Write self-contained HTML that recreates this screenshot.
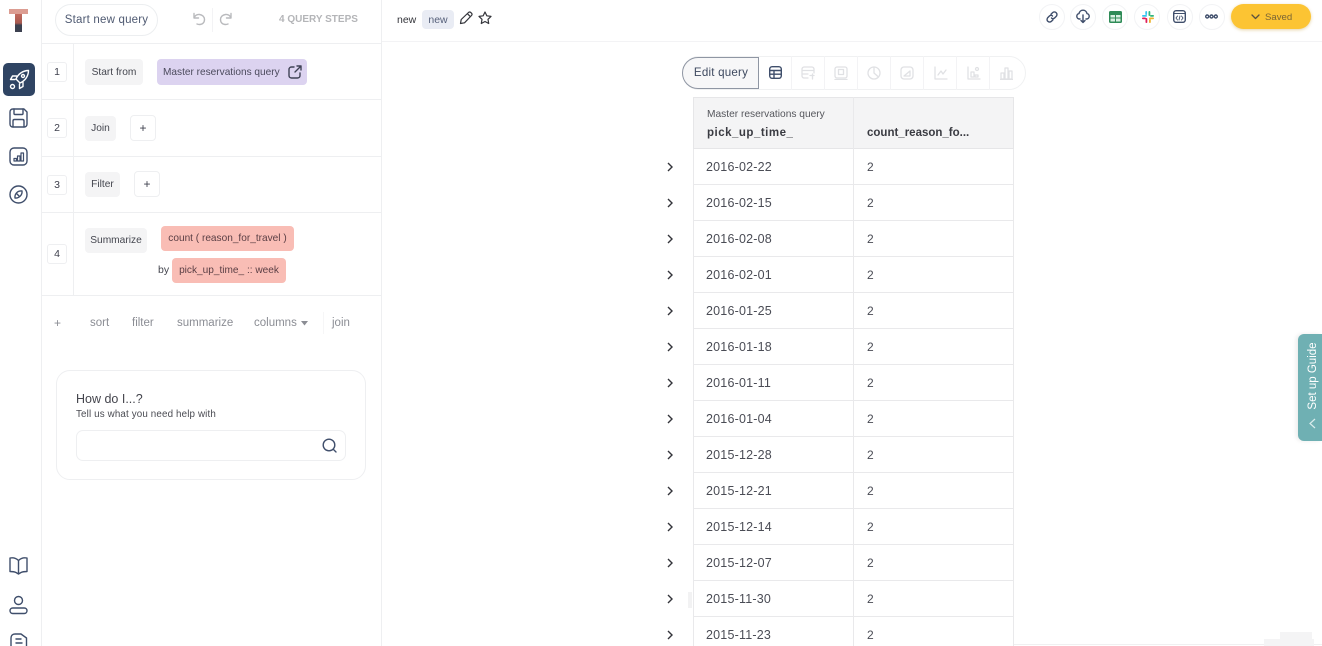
<!DOCTYPE html>
<html><head><meta charset="utf-8"><style>
html,body{margin:0;padding:0;background:#fff}
#p{position:relative;width:1322px;height:646px;overflow:hidden;background:#fff;font-family:"Liberation Sans",sans-serif;color:#3d3f4c;filter:blur(.3px)}
#p div,#p svg{position:absolute;box-sizing:border-box}
.t{white-space:nowrap;line-height:16px}
.ln{background:#eeeff1}
.chip{border-radius:4px;background:#f4f4f5;font-size:10.2px;text-align:center;color:#44464f}
.num{width:20px;height:20px;border:1px solid #eeeff1;border-radius:3px;font-size:10.5px;text-align:center;line-height:18px;left:47px}
.plus{border:1px solid #eeeff1;border-radius:4px;width:26px;height:26px;text-align:center;line-height:25px;font-size:12px}
.ic{fill:none;stroke:#3f4e6b;stroke-width:1.4;stroke-linecap:round;stroke-linejoin:round}
.rb{width:26px;height:26px;border:1px solid #f2f3f5;border-radius:50%;background:#fff;top:4px}
.seg{top:56px;width:1px;height:34px;background:#f3f3f5}
.lt{fill:none;stroke:#e0e1e4;stroke-width:1.3;stroke-linejoin:round;stroke-linecap:round}
.r{left:693px;width:321px;height:36px;border:1px solid #e9e9eb;border-top:0;font-size:12.5px;line-height:37px;color:#4a4c55}
.r i{position:absolute;left:12px;font-style:normal;letter-spacing:.2px}
.r b{position:absolute;left:173px;font-weight:400;font-size:12px}
.c{left:666px;width:8px;height:12px}
.a{color:#8b8d94;font-size:11.5px;top:315px}
</style></head><body><div id="p">

<!-- sidebars lines -->
<div class="ln" style="left:41px;top:0;width:1px;height:646px"></div>
<div class="ln" style="left:381px;top:0;width:1px;height:646px"></div>
<div class="ln" style="left:42px;top:43px;width:339px;height:1px"></div>
<div class="ln" style="left:42px;top:99px;width:339px;height:1px"></div>
<div class="ln" style="left:42px;top:156px;width:339px;height:1px"></div>
<div class="ln" style="left:42px;top:212px;width:339px;height:1px"></div>
<div class="ln" style="left:42px;top:295px;width:339px;height:1px"></div>
<div class="ln" style="left:73px;top:44px;width:1px;height:251px"></div>
<div class="ln" style="left:382px;top:41px;width:940px;height:1px;background:#f3f3f5"></div>

<!-- logo -->
<div style="left:9px;top:9px;width:19px;height:5px;background:#dc9d92"></div>
<div style="left:15px;top:14px;width:7px;height:18px;background:linear-gradient(#c26a5e 0,#a85a50 50%,#3c4150 62%,#3c4150 100%)"></div>

<!-- nav icons -->
<div style="left:3px;top:63px;width:32px;height:33px;border-radius:5px;background:#2f4463"></div>
<svg style="left:8px;top:68px" width="23" height="23" viewBox="0 0 23 23" class="ic"><path d="M8 11C10 6 15 2.500 20.500 2.500C20.500 8 17 13 12 15L8 11Z" stroke="#fff"/><path d="M8.500 8H4.500L2.500 11.500H7M15 14.500V18.500L11.500 20.500V16" stroke="#fff"/><circle cx="15" cy="8" r="1.500" stroke="#fff"/><circle cx="4.500" cy="18.500" r="2" stroke="#fff"/></svg>
<svg style="left:9px;top:108px" width="19" height="20" viewBox="0 0 19 20" class="ic"><path d="M4 1H15L18 4V16C18 17.700 17 19 15 19H4C2 19 1 17.700 1 16V4C1 2.300 2 1 4 1Z"/><path d="M5 1V5.500C5 6.200 5.500 6.500 6 6.500H13C13.500 6.500 14 6.200 14 5.500V1M4 19V13C4 12 4.500 11.500 5.500 11.500H13.500C14.500 11.500 15 12 15 13V19"/></svg>
<svg style="left:9px;top:147px" width="19" height="19" viewBox="0 0 19 19" class="ic"><rect x="1" y="1" width="17" height="17" rx="4"/><path d="M5 14V11.500H7.500V14H5ZM8.500 14V9H11V14H8.500ZM12 14V6H14.500V14H12Z" stroke-width="1.200"/></svg>
<svg style="left:9px;top:185px" width="19" height="19" viewBox="0 0 19 19" class="ic"><circle cx="9.500" cy="9.500" r="8.500"/><path d="M6 13C5.500 9 8.500 5.500 13 6C13.500 10 10 13.500 6 13ZM7.500 8.500L10.500 11.500"/></svg>
<svg style="left:9px;top:556px" width="19" height="19" viewBox="0 0 19 19" class="ic"><path d="M9.500 18L7 16.500C5 15.500 3 15.500 1 15.500V2C3.500 1.500 7 2 9.500 4.500C12 2 15.500 1.500 18 2V15.500C16 15.500 14 15.500 12 16.500L9.500 18ZM9.500 4.500V18"/></svg>
<svg style="left:9px;top:595px" width="19" height="20" viewBox="0 0 19 20" class="ic"><circle cx="9.500" cy="5.500" r="4"/><rect x="1" y="13" width="17" height="5.500" rx="2.750"/></svg>
<svg style="left:10px;top:633px" width="18" height="13" viewBox="0 0 18 13" class="ic"><path d="M1 14V5C1 2.500 2.500 1 5 1H11L16.500 5V14M6 6H11M6 10H12"/></svg>

<!-- top of panel -->
<div class="t" style="left:55px;top:4px;width:103px;height:32px;border:1px solid #eceef0;border-radius:16px;font-size:11.5px;line-height:30px;text-align:center;color:#4f5a72;letter-spacing:.2px">Start new query</div>
<svg style="left:192px;top:12px" width="14" height="14" viewBox="0 0 14 14" fill="none" stroke="#b9babd" stroke-width="1.400" stroke-linecap="round" stroke-linejoin="round"><path d="M2 1.500V6H6.500M2 6C3 3.500 5 2.300 7.500 2.500C10.500 2.800 12.500 5 12.500 7.500C12.500 10.500 10.500 12.500 7.500 12.500C6.500 12.500 5.500 12.200 5 12"/></svg>
<div class="ln" style="left:212px;top:8px;width:1px;height:24px;background:#f3f3f5"></div>
<svg style="left:219px;top:12px" width="14" height="14" viewBox="0 0 14 14" fill="none" stroke="#b9babd" stroke-width="1.400" stroke-linecap="round" stroke-linejoin="round"><path d="M12 1.500V6H7.500M12 6C11 3.500 9 2.300 6.500 2.500C3.500 2.800 1.500 5 1.500 7.500C1.500 10.500 3.500 12.500 6.500 12.500C7.500 12.500 8.500 12.200 9 12"/></svg>
<div class="t" style="left:279px;top:12px;font-size:10px;font-weight:700;color:#b4b5b8">4 QUERY STEPS</div>

<!-- step 1 -->
<div class="num" style="top:62px">1</div>
<div class="chip t" style="left:85px;top:59px;width:58px;height:26px;line-height:28px">Start from</div>
<div class="t" style="left:157px;top:59px;width:150px;height:26px;background:#dcd3f0;border-radius:4px"></div>
<div class="t" style="left:163px;top:65px;font-size:10.1px;color:#4b4a5c">Master reservations query</div>
<svg style="left:288px;top:65px" width="14" height="14" viewBox="0 0 14 14" fill="none" stroke="#3f4255" stroke-width="1.400" stroke-linecap="round" stroke-linejoin="round"><path d="M6 2H3.500C2 2 1 3 1 4.500V10.500C1 12 2 13 3.500 13H9.500C11 13 12 12 12 10.500V8M7 7L13 1M9 1H13V5"/></svg>

<!-- step 2 -->
<div class="num" style="top:118px">2</div>
<div class="chip t" style="left:85px;top:116px;width:31px;height:25px;line-height:26px">Join</div>
<div class="plus" style="left:130px;top:115px">+</div>

<!-- step 3 -->
<div class="num" style="top:175px">3</div>
<div class="chip t" style="left:85px;top:172px;width:35px;height:25px;line-height:26px">Filter</div>
<div class="plus" style="left:134px;top:171px">+</div>

<!-- step 4 -->
<div class="num" style="top:244px">4</div>
<div class="chip t" style="left:85px;top:228px;width:62px;height:25px;line-height:26px">Summarize</div>
<div class="t" style="left:161px;top:226px;width:133px;height:25px;background:#f9bdb5;border-radius:4px;font-size:10.1px;line-height:26px;text-align:center;color:#5a3e44">count ( reason_for_travel )</div>
<div class="t" style="left:158px;top:262px;font-size:10.5px;color:#44464f">by</div>
<div class="t" style="left:172px;top:258px;width:114px;height:25px;background:#f9bdb5;border-radius:4px;font-size:10.1px;line-height:26px;text-align:center;color:#5a3e44">pick_up_time_ :: week</div>

<!-- actions -->
<div class="t a" style="left:54px;font-size:12px">+</div>
<div class="t a" style="left:90px">sort</div>
<div class="t a" style="left:132px">filter</div>
<div class="t a" style="left:177px">summarize</div>
<div class="t a" style="left:254px">columns</div>
<svg style="left:301px;top:321px" width="7" height="5" viewBox="0 0 7 5"><path d="M0 0H7L3.500 4.500Z" fill="#8b8d94"/></svg>
<div class="ln" style="left:323px;top:312px;width:1px;height:22px;background:#f6f6f7"></div>
<div class="t a" style="left:332px">join</div>

<!-- help -->
<div style="left:56px;top:370px;width:310px;height:110px;border:1px solid #eeeff1;border-radius:14px"></div>
<div class="t" style="left:76px;top:391px;font-size:12.5px;color:#44454d">How do I...?</div>
<div class="t" style="left:76px;top:407px;font-size:9.8px;color:#4a4b52;letter-spacing:.14px">Tell us what you need help with</div>
<div style="left:76px;top:430px;width:270px;height:31px;border:1px solid #eeeff1;border-radius:7px"></div>
<svg style="left:322px;top:438px" width="15" height="15" viewBox="0 0 15 15" class="ic"><circle cx="7" cy="7" r="5.800"/><path d="M11.500 11.500L14 14"/></svg>

<!-- title -->
<div class="t" style="left:397px;top:12px;font-size:10.5px;color:#33343a">new</div>
<div class="t" style="left:422px;top:10px;width:32px;height:19px;background:#e9ecf4;border-radius:4px;font-size:10.5px;line-height:20px;text-align:center;color:#56607a">new</div>
<svg style="left:459px;top:11px" width="14" height="14" viewBox="0 0 14 14" fill="none" stroke="#33343a" stroke-width="1.200" stroke-linejoin="round" stroke-linecap="round"><path d="M1.500 12.500L2.200 8.500L9.500 1.500C10.200 .8 11 .8 11.800 1.500L12.500 2.200C13.200 3 13.200 3.800 12.500 4.500L5.500 11.800L1.500 12.500ZM8.500 2.800L11.300 5.600"/></svg>
<svg style="left:478px;top:11px" width="14" height="14" viewBox="0 0 14 14" fill="none" stroke="#33343a" stroke-width="1.200" stroke-linejoin="round"><path d="M7 1L8.800 4.800L13 5.400L10 8.300L10.700 12.500L7 10.500L3.300 12.500L4 8.300L1 5.400L5.200 4.800Z"/></svg>

<!-- right buttons -->
<div class="rb" style="left:1039px"></div>
<svg style="left:1046px;top:11px" width="12" height="12" viewBox="0 0 12 12" class="ic" stroke-width="1.100"><path d="M5 3.200L6.500 1.700C7.500 .7 9.200 .7 10.200 1.700C11.200 2.700 11.200 4.400 10.200 5.400L8.700 6.900C7.700 7.900 6 7.900 5.500 7M7 8.800L5.500 10.300C4.500 11.300 2.800 11.300 1.800 10.300C.8 9.300 .8 7.600 1.800 6.600L3.300 5.100C4.300 4.100 6 4.100 6.500 5"/></svg>
<div class="rb" style="left:1070px"></div>
<svg style="left:1076px;top:9px" width="14" height="15" viewBox="0 0 14 15" class="ic" stroke-width="1"><path d="M4 10H3.500C2 10 .8 8.800 .8 7.300C.8 5.900 1.800 4.800 3 4.600C3.400 2.600 5 1.200 7 1.200C9 1.200 10.600 2.600 11 4.600C12.200 4.800 13.200 5.900 13.200 7.300C13.200 8.800 12 10 10.500 10H10M7 6V13.500M5 11.500L7 13.500L9 11.500"/></svg>
<div class="rb" style="left:1102px"></div>
<svg style="left:1109px;top:11px" width="13" height="12" viewBox="0 0 13 12"><rect width="13" height="12" rx="1.500" fill="#2e8b57"/><path d="M1.500 4H6V6.500H1.500ZM7 4H11.500V6.500H7ZM1.500 7.500H6V10.500H1.500ZM7 7.500H11.500V10.500H7Z" fill="#d9efe2"/></svg>
<div class="rb" style="left:1134px"></div>
<svg style="left:1142px;top:11px" width="12" height="12" viewBox="0 0 12 12"><rect x="0" y="4" width="5" height="1.800" rx=".9" fill="#36c5f0"/><rect x="3.300" y="0" width="1.800" height="4" rx=".9" fill="#36c5f0"/><rect x="6.500" y="0" width="1.800" height="5" rx=".9" fill="#2eb67d"/><rect x="8" y="4" width="4" height="1.800" rx=".9" fill="#2eb67d"/><rect x="7" y="6.500" width="5" height="1.800" rx=".9" fill="#ecb22e"/><rect x="7" y="8" width="1.800" height="4" rx=".9" fill="#ecb22e"/><rect x="3.500" y="7" width="1.800" height="5" rx=".9" fill="#e01e5a"/><rect x="0" y="6.500" width="4" height="1.800" rx=".9" fill="#e01e5a"/></svg>
<div class="rb" style="left:1167px"></div>
<svg style="left:1173px;top:10px" width="13" height="13" viewBox="0 0 13 13" class="ic" stroke-width="1.100"><rect x=".7" y=".7" width="11.600" height="11.600" rx="2.500"/><path d="M.7 3.500H12.300M4.500 6L3 8L4.500 10M8.500 6L10 8L8.500 10M7 6L6 10" stroke-width=".9"/></svg>
<div class="rb" style="left:1199px"></div>
<svg style="left:1205px;top:14px" width="13" height="5" viewBox="0 0 13 5" class="ic" stroke-width="1"><circle cx="2.200" cy="2.500" r="1.500"/><circle cx="6.500" cy="2.500" r="1.500"/><circle cx="10.800" cy="2.500" r="1.500"/></svg>
<div style="left:1231px;top:4px;width:80px;height:25px;border-radius:13px;background:#fcc433;box-shadow:0 1px 3px rgba(200,160,60,.45)"></div>
<svg style="left:1251px;top:14px" width="9" height="6" viewBox="0 0 9 6" fill="none" stroke="#5a5040" stroke-width="1.300" stroke-linecap="round" stroke-linejoin="round"><path d="M1 1L4.500 4.500L8 1"/></svg>
<div class="t" style="left:1265px;top:10px;font-size:9.6px;color:#7a6535">Saved</div>

<!-- viz toolbar -->
<div style="left:682px;top:56px;width:344px;height:34px;border:1px solid #f0f1f2;border-radius:17px"></div>
<div class="t" style="left:682px;top:57px;width:77px;height:32px;border:1px solid #8f96a3;border-radius:16px 0 0 16px;background:#f7f7f8;font-size:11.6px;line-height:30px;text-align:center;padding-left:1px;color:#3f4a60;letter-spacing:.2px">Edit query</div>
<svg style="left:769px;top:66px" width="13" height="13" viewBox="0 0 13 13" class="ic" stroke-width="1.300"><rect x=".7" y=".7" width="11.600" height="11.600" rx="2.500"/><path d="M.7 4.500H12.300M.7 8.200H12.300M5 4.500V12.300"/></svg>
<div class="seg" style="left:791px"></div><div class="seg" style="left:824px"></div><div class="seg" style="left:857px"></div><div class="seg" style="left:890px"></div><div class="seg" style="left:923px"></div><div class="seg" style="left:956px"></div><div class="seg" style="left:989px"></div>
<svg style="left:801px;top:66px" width="14" height="14" viewBox="0 0 14 14" class="lt"><path d="M7 12H3C2 12 1 11 1 10V3C1 2 2 1 3 1H11C12 1 13 2 13 3V7M1 4.500H13M1 8H7M9 9.500H13M11.500 8V13"/></svg>
<svg style="left:834px;top:66px" width="14" height="14" viewBox="0 0 14 14" class="lt"><rect x="1" y="1" width="12" height="11" rx="2"/><rect x="4.500" y="3.500" width="5" height="5"/><path d="M1 13.500H13"/></svg>
<svg style="left:867px;top:66px" width="14" height="14" viewBox="0 0 14 14" class="lt"><circle cx="7" cy="7" r="6"/><path d="M7 1V7L11.500 11"/></svg>
<svg style="left:900px;top:66px" width="14" height="14" viewBox="0 0 14 14" class="lt"><rect x="1" y="1" width="12" height="12" rx="3"/><path d="M4 10L10 5V10Z"/></svg>
<svg style="left:934px;top:66px" width="14" height="14" viewBox="0 0 14 14" class="lt"><path d="M1 1V13H13M4 9L7 5L9 8L12 4"/></svg>
<svg style="left:967px;top:66px" width="14" height="14" viewBox="0 0 14 14" class="lt"><path d="M1 1V13H13M4 8V11H7V6H4ZM8 9H11V11H8Z"/><circle cx="10" cy="3" r="1.500"/></svg>
<svg style="left:1000px;top:66px" width="13" height="14" viewBox="0 0 13 14" class="lt"><path d="M1 13V7H4V13ZM5 13V2H8V13ZM9 13V5H12V13ZM0 13.500H13"/></svg>

<!-- table header -->
<div style="left:693px;top:97px;width:321px;height:52px;background:#f4f4f5;border:1px solid #e6e6e8"></div>
<div style="left:853px;top:97px;width:1px;height:549px;background:#e9e9eb"></div>
<div class="t" style="left:707px;top:107px;font-size:10.2px;color:#55565c">Master reservations query</div>
<div class="t" style="left:707px;top:125px;font-size:11.5px;font-weight:700;color:#3a3b42;letter-spacing:.5px">pick_up_time_</div>
<div class="t" style="left:867px;top:125px;font-size:11.5px;font-weight:700;color:#3a3b42">count_reason_fo...</div>

<!-- rows -->
<div class="r" style="top:149px"><i>2016-02-22</i><b>2</b></div>
<div class="r" style="top:185px"><i>2016-02-15</i><b>2</b></div>
<div class="r" style="top:221px"><i>2016-02-08</i><b>2</b></div>
<div class="r" style="top:257px"><i>2016-02-01</i><b>2</b></div>
<div class="r" style="top:293px"><i>2016-01-25</i><b>2</b></div>
<div class="r" style="top:329px"><i>2016-01-18</i><b>2</b></div>
<div class="r" style="top:365px"><i>2016-01-11</i><b>2</b></div>
<div class="r" style="top:401px"><i>2016-01-04</i><b>2</b></div>
<div class="r" style="top:437px"><i>2015-12-28</i><b>2</b></div>
<div class="r" style="top:473px"><i>2015-12-21</i><b>2</b></div>
<div class="r" style="top:509px"><i>2015-12-14</i><b>2</b></div>
<div class="r" style="top:545px"><i>2015-12-07</i><b>2</b></div>
<div class="r" style="top:581px"><i>2015-11-30</i><b>2</b></div>
<div class="r" style="top:617px"><i>2015-11-23</i><b>2</b></div>
<div style="left:853px;top:149px;width:1px;height:497px;background:#e9e9eb"></div>

<!-- chevrons -->
<svg class="c" style="top:161px" viewBox="0 0 8 12"><path d="M2 2L6 6L2 10" fill="none" stroke="#33343a" stroke-width="1.400"/></svg>
<svg class="c" style="top:197px" viewBox="0 0 8 12"><path d="M2 2L6 6L2 10" fill="none" stroke="#33343a" stroke-width="1.400"/></svg>
<svg class="c" style="top:233px" viewBox="0 0 8 12"><path d="M2 2L6 6L2 10" fill="none" stroke="#33343a" stroke-width="1.400"/></svg>
<svg class="c" style="top:269px" viewBox="0 0 8 12"><path d="M2 2L6 6L2 10" fill="none" stroke="#33343a" stroke-width="1.400"/></svg>
<svg class="c" style="top:305px" viewBox="0 0 8 12"><path d="M2 2L6 6L2 10" fill="none" stroke="#33343a" stroke-width="1.400"/></svg>
<svg class="c" style="top:341px" viewBox="0 0 8 12"><path d="M2 2L6 6L2 10" fill="none" stroke="#33343a" stroke-width="1.400"/></svg>
<svg class="c" style="top:377px" viewBox="0 0 8 12"><path d="M2 2L6 6L2 10" fill="none" stroke="#33343a" stroke-width="1.400"/></svg>
<svg class="c" style="top:413px" viewBox="0 0 8 12"><path d="M2 2L6 6L2 10" fill="none" stroke="#33343a" stroke-width="1.400"/></svg>
<svg class="c" style="top:449px" viewBox="0 0 8 12"><path d="M2 2L6 6L2 10" fill="none" stroke="#33343a" stroke-width="1.400"/></svg>
<svg class="c" style="top:485px" viewBox="0 0 8 12"><path d="M2 2L6 6L2 10" fill="none" stroke="#33343a" stroke-width="1.400"/></svg>
<svg class="c" style="top:521px" viewBox="0 0 8 12"><path d="M2 2L6 6L2 10" fill="none" stroke="#33343a" stroke-width="1.400"/></svg>
<svg class="c" style="top:557px" viewBox="0 0 8 12"><path d="M2 2L6 6L2 10" fill="none" stroke="#33343a" stroke-width="1.400"/></svg>
<svg class="c" style="top:629px" viewBox="0 0 8 12"><path d="M2 2L6 6L2 10" fill="none" stroke="#33343a" stroke-width="1.400"/></svg>
<div style="left:688px;top:592px;width:4px;height:16px;background:#f2f2f3"></div>
<svg class="c" style="top:593px" viewBox="0 0 8 12"><path d="M2 2L6 6L2 10" fill="none" stroke="#33343a" stroke-width="1.400"/></svg>

<!-- bottom right bits -->
<div style="left:1014px;top:644px;width:308px;height:1px;background:#f0f0f1"></div>
<div style="left:1280px;top:632px;width:32px;height:14px;background:#f4f4f5"></div>
<div style="left:1264px;top:639px;width:50px;height:7px;background:#f4f4f5"></div>

<!-- guide tab -->
<div style="left:1298px;top:334px;width:24px;height:107px;background:#6fb0b3;border-radius:6px 0 0 6px;box-shadow:-2px 0 4px rgba(0,0,0,.08)"></div>
<div class="t" style="left:1271px;top:368px;width:80px;height:16px;transform:rotate(-90deg) translateY(2px);text-align:center;font-size:11.5px;color:#fff">Set up Guide</div>
<svg style="left:1309px;top:418px" width="7" height="11" viewBox="0 0 7 11" fill="none" stroke="#d9ecec" stroke-width="1.200"><path d="M6 1L1 5.500L6 10"/></svg>

</div></body></html>
